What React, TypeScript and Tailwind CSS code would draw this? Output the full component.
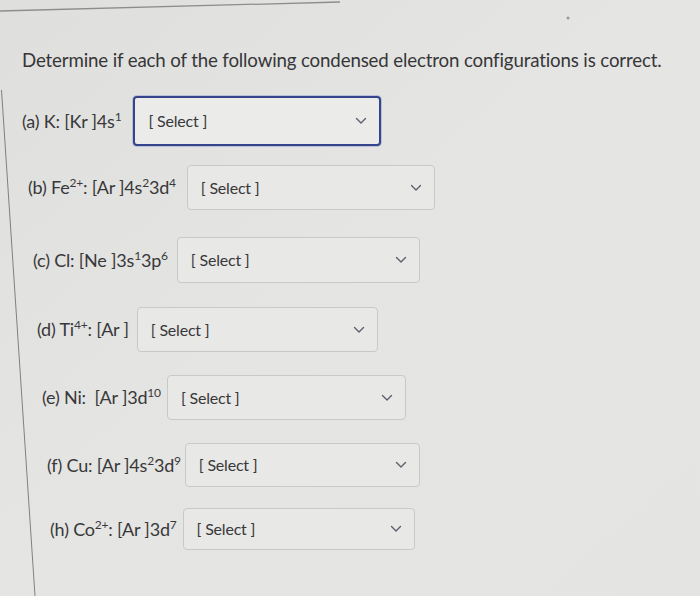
import React from "react";

const Sup = ({ children }: { children: React.ReactNode }) => (
  <sup className="text-[12px] relative -top-[0.55em] align-baseline">{children}</sup>
);

const Chevron = () => (
  <svg width="12" height="8" viewBox="0 0 12 8" className="shrink-0">
    <path d="M1.5 1.5 L6 6 L10.5 1.5" fill="none" stroke="#5a5f6a" strokeWidth="1.4" strokeLinecap="round" strokeLinejoin="round" />
  </svg>
);

type RowProps = {
  label: React.ReactNode;
  ml: string;
  mt: string;
  w: string;
  h: string;
  gap: string;
  focused?: boolean;
};

const Row = ({ label, ml, mt, w, h, gap, focused }: RowProps) => (
  <div className={`flex items-center ${ml} ${mt}`}>
    <div className="text-[18px] text-[#38383a] whitespace-nowrap tracking-[-0.2px]">{label}</div>
    <div
      className={`${w} ${h} ${gap} flex items-center justify-between pl-[13px] pr-[12px] rounded-[4px] ${
        focused
          ? "border-2 border-[#36448c] shadow-[0_0_0_1px_#b9c0d8] bg-[#ebebea]"
          : "border border-[#c9c9c7] bg-[#e8e8e6]"
      }`}
    >
      <span className="text-[16px] text-[#38383a] tracking-[-0.2px]">[ Select ]</span>
      <Chevron />
    </div>
  </div>
);

export default function App() {
  return (
    <div
      className="relative w-[700px] h-[596px] overflow-hidden bg-gradient-to-br from-[#dfdfdd] via-[#e5e5e3] to-[#e4e4e2]"
      style={{ fontFamily: "Lato, 'Open Sans', sans-serif" }}
    >
      <svg className="absolute inset-0 pointer-events-none" width="700" height="596">
        <line x1="0" y1="11" x2="340" y2="2" stroke="#8d8d8d" strokeWidth="1.3" />
        <line x1="1.5" y1="90" x2="35" y2="596" stroke="#808080" strokeWidth="1" />
        <circle cx="568" cy="18" r="1.5" fill="#9a9a9a" />
      </svg>
      <div className="relative flex flex-col">
        <div className="ml-[22px] mt-[46px] text-[18.7px] text-[#363638] whitespace-nowrap tracking-[-0.15px]">
          Determine if each of the following condensed electron configurations is correct.
        </div>
        <Row
          ml="ml-[22px]"
          mt="mt-[22px]"
          w="w-[248px]"
          h="h-[50px]"
          gap="ml-[12px]"
          focused
          label={
            <>
              (a) K: [Kr ]4s<Sup>1</Sup>
            </>
          }
        />
        <Row
          ml="ml-[28px]"
          mt="mt-[19px]"
          w="w-[248px]"
          h="h-[45px]"
          gap="ml-[11px]"
          label={
            <>
              (b) Fe<Sup>2+</Sup>: [Ar ]4s<Sup>2</Sup>3d<Sup>4</Sup>
            </>
          }
        />
        <Row
          ml="ml-[33px]"
          mt="mt-[27px]"
          w="w-[243px]"
          h="h-[46px]"
          gap="ml-[9px]"
          label={
            <>
              (c) Cl: [Ne ]3s<Sup>1</Sup>3p<Sup>6</Sup>
            </>
          }
        />
        <Row
          ml="ml-[37px]"
          mt="mt-[24px]"
          w="w-[241px]"
          h="h-[45px]"
          gap="ml-[8px]"
          label={
            <>
              (d) Ti<Sup>4+</Sup>: [Ar ]
            </>
          }
        />
        <Row
          ml="ml-[42px]"
          mt="mt-[23px]"
          w="w-[239px]"
          h="h-[45px]"
          gap="ml-[6px]"
          label={
            <>
              (e) Ni:&nbsp; [Ar ]3d<Sup>10</Sup>
            </>
          }
        />
        <Row
          ml="ml-[47px]"
          mt="mt-[23px]"
          w="w-[235px]"
          h="h-[44px]"
          gap="ml-[4px]"
          label={
            <>
              (f) Cu: [Ar ]4s<Sup>2</Sup>3d<Sup>9</Sup>
            </>
          }
        />
        <Row
          ml="ml-[50px]"
          mt="mt-[21px]"
          w="w-[232px]"
          h="h-[42px]"
          gap="ml-[6px]"
          label={
            <>
              (h) Co<Sup>2+</Sup>: [Ar ]3d<Sup>7</Sup>
            </>
          }
        />
      </div>
    </div>
  );
}
